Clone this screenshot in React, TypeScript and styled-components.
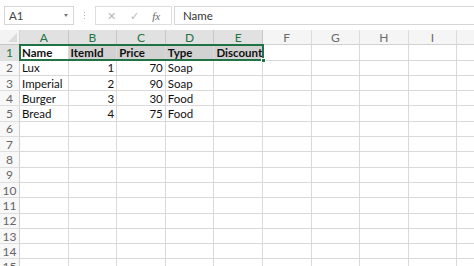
import React from "react";
import styled, { createGlobalStyle } from "styled-components";

const Global = createGlobalStyle`
  html, body { margin: 0; padding: 0; background: #ffffff; }
  body { font-family: "Lato", "Liberation Sans", sans-serif; overflow: hidden; }
`;

const COLW = 48.6;
const ROWH = 15.3;

const Page = styled.div`
  width: 474px;
  height: 266px;
  display: flex;
  flex-direction: column;
  overflow: hidden;
  background: #fff;
`;

const Toolbar = styled.div`
  height: 30px;
  flex-shrink: 0;
  display: flex;
  align-items: flex-start;
  padding-top: 6px;
  box-sizing: border-box;
  padding-left: 4px;
`;

const NameBox = styled.div`
  width: 70px;
  height: 19px;
  box-sizing: border-box;
  border: 1px solid #d6d6d6;
  display: flex;
  align-items: center;
  justify-content: space-between;
  padding: 0 5px 0 4px;
  font-size: 11.5px;
  color: #444;
`;

const Caret = styled.span`
  width: 0;
  height: 0;
  border-left: 2.5px solid transparent;
  border-right: 2.5px solid transparent;
  border-top: 3px solid #777;
`;

const Dots = styled.div`
  width: 21px;
  height: 19px;
  display: flex;
  flex-direction: column;
  align-items: center;
  justify-content: center;
  gap: 2px;
  span {
    width: 1px;
    height: 1px;
    background: #bbb;
  }
`;

const FxBox = styled.div`
  width: 77px;
  height: 19px;
  box-sizing: border-box;
  border: 1px solid #dedede;
  display: flex;
  align-items: center;
  justify-content: space-around;
  padding: 0 4px;
  color: #b8b8b8;
  font-size: 11px;
`;

const FxLabel = styled.span`
  font-family: "Liberation Serif", serif;
  font-style: italic;
  color: #666;
  font-size: 11px;
`;

const FormulaInput = styled.div`
  flex: 1;
  height: 19px;
  box-sizing: border-box;
  border-top: 1px solid #d6d6d6;
  border-bottom: 1px solid #d6d6d6;
  border-left: 1px solid #d6d6d6;
  margin-left: 2px;
  display: flex;
  align-items: center;
  padding-left: 8px;
  font-size: 11.5px;
  color: #333;
`;

const SheetWrap = styled.div`
  position: relative;
  flex: 1;
  min-height: 0;
`;

const Sheet = styled.div`
  display: grid;
  grid-template-columns: 20px repeat(9, ${COLW}px) 40px;
  grid-auto-rows: ${ROWH}px;
`;

const Corner = styled.div`
  background: #f3f3f3;
  border-right: 1px solid #d4d4d4;
  border-bottom: 1px solid #c6c6c6;
  box-sizing: border-box;
  position: relative;
  &::after {
    content: "";
    position: absolute;
    right: 2px;
    bottom: 2px;
    border-left: 9px solid transparent;
    border-bottom: 9px solid #dcdcdc;
  }
`;

const ColHeader = styled.div<{ $sel?: boolean }>`
  box-sizing: border-box;
  background: ${(p) => (p.$sel ? "#e1e1e1" : "#f5f5f5")};
  border-right: 1px solid ${(p) => (p.$sel ? "#c8c8c8" : "#dcdcdc")};
  border-bottom: 1px solid ${(p) => (p.$sel ? "#217346" : "#d0d0d0")};
  color: ${(p) => (p.$sel ? "#217346" : "#6a6a6a")};
  font-size: 12px;
  display: flex;
  align-items: center;
  justify-content: center;
`;

const RowHeader = styled.div<{ $sel?: boolean }>`
  box-sizing: border-box;
  background: ${(p) => (p.$sel ? "#e1e1e1" : "#f8f8f8")};
  border-right: 1px solid ${(p) => (p.$sel ? "#217346" : "#d0d0d0")};
  border-bottom: 1px solid #dedede;
  color: ${(p) => (p.$sel ? "#217346" : "#666")};
  font-size: 12px;
  display: flex;
  align-items: center;
  justify-content: center;
`;

const Cell = styled.div<{ $bold?: boolean; $num?: boolean; $shade?: boolean }>`
  box-sizing: border-box;
  border-right: 1px solid #d9d9d9;
  border-bottom: 1px solid #d9d9d9;
  background: ${(p) => (p.$shade ? "#d2d2d2" : "#fff")};
  font-size: 11.5px;
  font-weight: ${(p) => (p.$bold ? 700 : 400)};
  color: #111;
  display: flex;
  align-items: center;
  justify-content: ${(p) => (p.$num ? "flex-end" : "flex-start")};
  padding: 0 2px 0 2px;
  white-space: nowrap;
  overflow: hidden;
`;

const Selection = styled.div`
  position: absolute;
  left: 19px;
  top: ${ROWH - 1}px;
  width: ${COLW * 5 + 2}px;
  height: ${ROWH + 1}px;
  box-sizing: border-box;
  border: 2px solid #217346;
  pointer-events: none;
`;

const Handle = styled.div`
  position: absolute;
  right: -4px;
  bottom: -4px;
  width: 5px;
  height: 5px;
  background: #217346;
  border: 1px solid #fff;
  box-sizing: border-box;
`;

const cols = ["A", "B", "C", "D", "E", "F", "G", "H", "I", "J"];

type Row = (string | number)[];
const data: Row[] = [
  ["Name", "ItemId", "Price", "Type", "Discount"],
  ["Lux", 1, 70, "Soap", ""],
  ["Imperial", 2, 90, "Soap", ""],
  ["Burger", 3, 30, "Food", ""],
  ["Bread", 4, 75, "Food", ""],
];

export default function App() {
  const rows = Array.from({ length: 15 }, (_, i) => i + 1);
  return (
    <Page>
      <Global />
      <Toolbar>
        <NameBox>
          <span>A1</span>
          <Caret />
        </NameBox>
        <Dots>
          <span />
          <span />
          <span />
        </Dots>
        <FxBox>
          <span>✕</span>
          <span>✓</span>
          <FxLabel>fx</FxLabel>
        </FxBox>
        <FormulaInput>Name</FormulaInput>
      </Toolbar>
      <SheetWrap>
        <Sheet>
          <Corner />
          {cols.map((c, i) => (
            <ColHeader key={c} $sel={i < 5}>
              {c === "J" ? "" : c}
            </ColHeader>
          ))}
          {rows.map((r) => (
            <React.Fragment key={r}>
              <RowHeader $sel={r === 1}>{r}</RowHeader>
              {cols.map((c, ci) => {
                const v = data[r - 1] ? data[r - 1][ci] : undefined;
                const val = v === undefined ? "" : v;
                return (
                  <Cell
                    key={c}
                    $bold={r === 1}
                    $num={typeof val === "number"}
                    $shade={r === 1 && ci > 0 && ci < 5}
                  >
                    {val}
                  </Cell>
                );
              })}
            </React.Fragment>
          ))}
        </Sheet>
        <Selection>
          <Handle />
        </Selection>
      </SheetWrap>
    </Page>
  );
}
